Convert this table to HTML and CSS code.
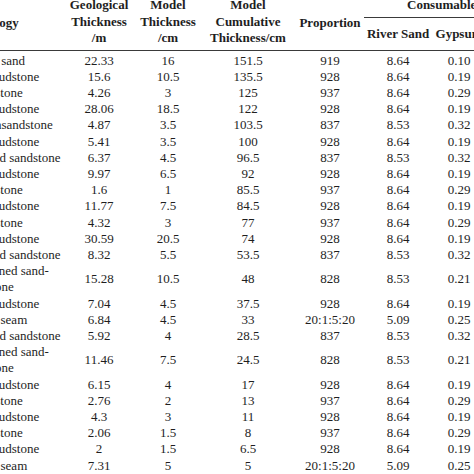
FILE: index.html
```html
<!DOCTYPE html>
<html>
<head>
<meta charset="utf-8">
<link rel="stylesheet" href="styles.css">
</head>
<body>
<div class="frame">
<table class="t">
<colgroup>
<col class="c-lith"><col class="c-geo"><col class="c-mt"><col class="c-cum"><col class="c-prop"><col class="c-river"><col class="c-gyp">
</colgroup>
<thead>
<tr class="h1">
<th rowspan="2" class="mid lith">Lithology</th>
<th rowspan="2" class="top">Geological<br>Thickness<br>/m</th>
<th rowspan="2" class="top">Model<br>Thickness<br>/cm</th>
<th rowspan="2" class="top">Model<br>Cumulative<br>Thickness/cm</th>
<th rowspan="2" class="mid">Proportion</th>
<th colspan="2" class="group">Consumable</th>
</tr>
<tr class="h2"><th>River Sand</th><th class="gyp">Gypsum</th></tr>
</thead>
<tbody>
<tr><td class="lith">Fine sand</td><td>22.33</td><td>16</td><td>151.5</td><td>919</td><td>8.64</td><td>0.10</td></tr>
<tr><td class="lith">Silty mudstone</td><td>15.6</td><td>10.5</td><td>135.5</td><td>928</td><td>8.64</td><td>0.19</td></tr>
<tr><td class="lith">Siltstone</td><td>4.26</td><td>3</td><td>125</td><td>937</td><td>8.64</td><td>0.29</td></tr>
<tr><td class="lith">Silty mudstone</td><td>28.06</td><td>18.5</td><td>122</td><td>928</td><td>8.64</td><td>0.19</td></tr>
<tr><td class="lith">Fine-grainsandstone</td><td>4.87</td><td>3.5</td><td>103.5</td><td>837</td><td>8.53</td><td>0.32</td></tr>
<tr><td class="lith">Silty mudstone</td><td>5.41</td><td>3.5</td><td>100</td><td>928</td><td>8.64</td><td>0.19</td></tr>
<tr><td class="lith">Fine-grained sandstone</td><td>6.37</td><td>4.5</td><td>96.5</td><td>837</td><td>8.53</td><td>0.32</td></tr>
<tr><td class="lith">Silty mudstone</td><td>9.97</td><td>6.5</td><td>92</td><td>928</td><td>8.64</td><td>0.19</td></tr>
<tr><td class="lith">Siltstone</td><td>1.6</td><td>1</td><td>85.5</td><td>937</td><td>8.64</td><td>0.29</td></tr>
<tr><td class="lith">Silty mudstone</td><td>11.77</td><td>7.5</td><td>84.5</td><td>928</td><td>8.64</td><td>0.19</td></tr>
<tr><td class="lith">Siltstone</td><td>4.32</td><td>3</td><td>77</td><td>937</td><td>8.64</td><td>0.29</td></tr>
<tr><td class="lith">Silty mudstone</td><td>30.59</td><td>20.5</td><td>74</td><td>928</td><td>8.64</td><td>0.19</td></tr>
<tr><td class="lith">Fine-grained sandstone</td><td>8.32</td><td>5.5</td><td>53.5</td><td>837</td><td>8.53</td><td>0.32</td></tr>
<tr><td class="lith">Fine-grained sand-<br>stone</td><td>15.28</td><td>10.5</td><td>48</td><td>828</td><td>8.53</td><td>0.21</td></tr>
<tr><td class="lith">Silty mudstone</td><td>7.04</td><td>4.5</td><td>37.5</td><td>928</td><td>8.64</td><td>0.19</td></tr>
<tr><td class="lith">Coal seam</td><td>6.84</td><td>4.5</td><td>33</td><td>20:1:5:20</td><td>5.09</td><td>0.25</td></tr>
<tr><td class="lith">Fine-grained sandstone</td><td>5.92</td><td>4</td><td>28.5</td><td>837</td><td>8.53</td><td>0.32</td></tr>
<tr><td class="lith">Fine-grained sand-<br>stone</td><td>11.46</td><td>7.5</td><td>24.5</td><td>828</td><td>8.53</td><td>0.21</td></tr>
<tr><td class="lith">Silty mudstone</td><td>6.15</td><td>4</td><td>17</td><td>928</td><td>8.64</td><td>0.19</td></tr>
<tr><td class="lith">Siltstone</td><td>2.76</td><td>2</td><td>13</td><td>937</td><td>8.64</td><td>0.29</td></tr>
<tr><td class="lith">Silty mudstone</td><td>4.3</td><td>3</td><td>11</td><td>928</td><td>8.64</td><td>0.19</td></tr>
<tr><td class="lith">Siltstone</td><td>2.06</td><td>1.5</td><td>8</td><td>937</td><td>8.64</td><td>0.29</td></tr>
<tr><td class="lith">Silty mudstone</td><td>2</td><td>1.5</td><td>6.5</td><td>928</td><td>8.64</td><td>0.19</td></tr>
<tr><td class="lith">Coal seam</td><td>7.31</td><td>5</td><td>5</td><td>20:1:5:20</td><td>5.09</td><td>0.25</td></tr>
</tbody>
</table>
</div>
</body>
</html>
```
FILE: styles.css
```css
html, body {
  margin: 0;
  padding: 0;
  background: #ffffff;
}
.frame {
  width: 474px;
  height: 474px;
  overflow: hidden;
}
.t {
  border-collapse: collapse;
  table-layout: fixed;
  width: 550px;
  margin-left: -64px;
  margin-top: -3px;
  font-family: "Liberation Serif", "Times New Roman", serif;
  font-size: 13px;
  color: #1e1e1e;
}
.c-lith { width: 126px; }
.c-geo { width: 74px; }
.c-mt { width: 64px; }
.c-cum { width: 96px; }
.c-prop { width: 68px; }
.c-river { width: 68px; }
.c-gyp { width: 54px; }
th {
  font-weight: bold;
  line-height: 16.5px;
  padding: 0;
  text-align: center;
  white-space: nowrap;
}
thead tr.h2 th,
thead th[rowspan] {
  border-bottom: 1px solid #3a3a3a;
}
th.top { vertical-align: top; }
th.mid { vertical-align: middle; }
th.lith { padding-right: 14px; }
th.group {
  text-align: left;
  padding: 0 0 3.5px 43px;
  border-bottom: 1px solid #3a3a3a;
}
tr.h2 th {
  padding: 7.5px 0;
  vertical-align: middle;
}
td {
  line-height: 16.2px;
  padding: 0;
  text-align: center;
  vertical-align: middle;
  white-space: nowrap;
}
td.lith {
  padding-left: 2px;
}
tbody tr:first-child td {
  padding-top: 2px;
}
```
